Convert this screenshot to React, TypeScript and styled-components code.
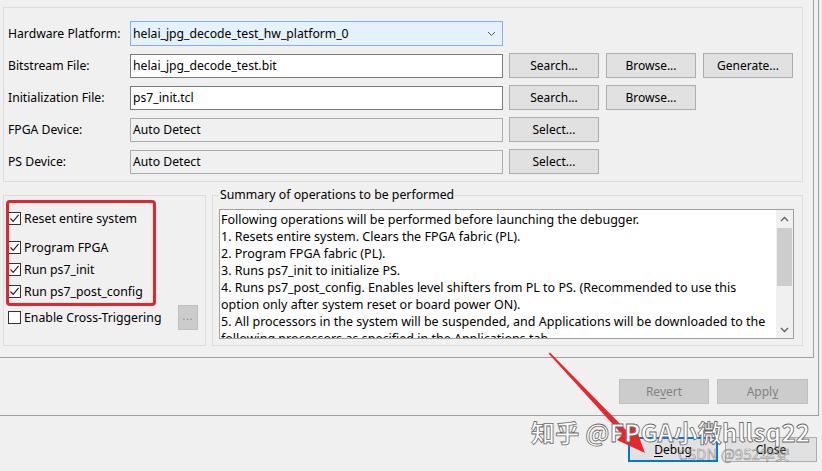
import React from 'react'
import styled, { createGlobalStyle } from 'styled-components'

const GlobalStyle = createGlobalStyle`
  html, body {
    margin: 0;
    padding: 0;
    background: #f0f0f0;
  }
  body {
    font-family: "Noto Sans", "Noto Sans CJK SC", sans-serif;
    font-size: 12px;
    color: #000;
  }
`

const Page = styled.div`
  position: relative;
  width: 822px;
  height: 471px;
  overflow: hidden;
  background: #f0f0f0;
`

const OuterFrame = styled.div`
  width: 819px;
  height: 416px;
  box-sizing: border-box;
  border-right: 1px solid #a0a0a0;
  border-bottom: 1px solid #a0a0a0;
`

const InnerFrame = styled.div`
  width: 814px;
  height: 358px;
  box-sizing: border-box;
  padding: 7px 0 0 3px;
  border-right: 1px solid #a0a0a0;
  border-bottom: 1px solid #a0a0a0;
`

const Group = styled.div<{ $width: number; $height: number }>`
  width: ${({ $width }) => $width}px;
  height: ${({ $height }) => $height}px;
  box-sizing: border-box;
  border: 1px solid #dcdcdc;
`

const FormGroup = styled(Group)`
  display: flex;
  flex-direction: column;
  gap: 7px;
  padding: 13px 0 0 4px;
`

const FormRow = styled.div`
  display: flex;
  align-items: center;
  height: 25px;
`

const Label = styled.div`
  width: 122px;
  line-height: 16px;
  white-space: nowrap;
  font-size: 12.2px;
`

const Field = styled.div<{ $kind: 'combo' | 'text' | 'disabled' }>`
  width: 373px;
  height: ${({ $kind }) => ($kind === 'combo' ? 25 : 24)}px;
  box-sizing: border-box;
  display: flex;
  align-items: center;
  justify-content: space-between;
  padding: 0 6px 0 2px;
  white-space: nowrap;
  font-size: 12.2px;
  background: ${({ $kind }) =>
    $kind === 'combo' ? '#e5f1fb' : $kind === 'text' ? '#ffffff' : '#f0f0f0'};
  border: 1px solid
    ${({ $kind }) => ($kind === 'combo' ? '#7eb4ea' : $kind === 'text' ? '#7a7a7a' : '#adadad')};
`

const ButtonGroup = styled.div`
  display: flex;
  gap: 7px;
  margin-left: 6px;
`

const Button = styled.div<{ $width?: number; $disabled?: boolean; $default?: boolean }>`
  width: ${({ $width }) => $width ?? 90}px;
  height: 25px;
  box-sizing: border-box;
  display: flex;
  align-items: center;
  justify-content: center;
  white-space: nowrap;
  background: ${({ $disabled }) => ($disabled ? '#cccccc' : '#e1e1e1')};
  color: ${({ $disabled }) => ($disabled ? '#838383' : '#000')};
  border: ${({ $default, $disabled }) =>
    $default ? '2px solid #0078d7' : `1px solid ${$disabled ? '#bfbfbf' : '#adadad'}`};
  u {
    text-decoration-thickness: 1px;
    text-underline-offset: 2px;
  }
`

const BottomRow = styled.div`
  display: flex;
  align-items: flex-end;
  gap: 6px;
  margin-top: 5px;
`

const CheckGroup = styled(Group)`
  display: flex;
  flex-direction: column;
  padding: 11px 7px 0 4px;
  font-size: 12.3px;
`

const CheckRow = styled.div<{ $gap?: number; $tall?: boolean }>`
  display: flex;
  align-items: center;
  gap: 3px;
  height: ${({ $tall }) => ($tall ? 25 : 22)}px;
  margin-top: ${({ $gap }) => $gap ?? 0}px;
  white-space: nowrap;
`

const CheckBox = styled.span`
  width: 13px;
  height: 13px;
  box-sizing: border-box;
  border: 1px solid #333;
  background: #fff;
  display: flex;
  align-items: center;
  justify-content: center;
  flex-shrink: 0;
`

const SmallButton = styled(Button)`
  margin-left: auto;
  letter-spacing: 1px;
  font-size: 10px;
  padding-bottom: 4px;
`

const SummarySet = styled.fieldset`
  width: 591px;
  margin: 0;
  padding: 0 8px 6px 6px;
  box-sizing: border-box;
  border: 1px solid #dcdcdc;
  min-width: 0;
`

const Legend = styled.legend`
  padding: 0 1px;
  line-height: 16px;
  font-size: 12.3px;
`

const TextBox = styled.div`
  margin-top: 6px;
  height: 130px;
  box-sizing: border-box;
  border: 1px solid #a0a0a0;
  background: #fff;
  display: flex;
`

const TextLines = styled.div`
  flex: 1;
  overflow: hidden;
  padding: 1px 0 0 1px;
  line-height: 17px;
  font-size: 12.5px;
  white-space: nowrap;
`

const ScrollBar = styled.div`
  width: 17px;
  background: #f0f0f0;
  display: flex;
  flex-direction: column;
  align-items: center;
`

const ScrollArrow = styled.div`
  height: 17px;
  width: 17px;
  display: flex;
  align-items: center;
  justify-content: center;
`

const Thumb = styled.div`
  width: 15px;
  height: 58px;
  margin-top: 1px;
  background: #cdcdcd;
`

const ScrollSpacer = styled.div`
  flex: 1;
`

const ActionRow = styled.div<{ $height: number; $gap: number; $right: number }>`
  height: ${({ $height }) => $height}px;
  box-sizing: border-box;
  display: flex;
  justify-content: flex-end;
  align-items: flex-start;
  padding: 21px ${({ $right }) => $right}px 0 0;
  gap: ${({ $gap }) => $gap}px;
`

const Annotation = styled.div`
  position: absolute;
  left: 6px;
  top: 200px;
  width: 150px;
  height: 106px;
  box-sizing: border-box;
  border: 3px solid #e3262b;
  border-radius: 4px;
  pointer-events: none;
`

const ArrowLayer = styled.svg`
  position: absolute;
  left: 0;
  top: 0;
  pointer-events: none;
`

const Watermark = styled.div`
  position: absolute;
  left: 531px;
  top: 416px;
  font-family: "Noto Sans CJK SC", "Noto Sans", sans-serif;
  font-size: 24px;
  font-weight: 700;
  letter-spacing: 0.3px;
  line-height: 32px;
  color: #fff;
  -webkit-text-stroke: 0.8px #6a6a6a;
  white-space: nowrap;
  pointer-events: none;
`

const CsdnMark = styled.div`
  position: absolute;
  left: 678px;
  top: 444px;
  font-family: "Noto Sans CJK SC", "Noto Sans", sans-serif;
  font-size: 15px;
  line-height: 20px;
  color: rgba(255, 255, 255, 0.35);
  -webkit-text-stroke: 0.6px rgba(90, 90, 90, 0.6);
  white-space: nowrap;
  pointer-events: none;
`

const Chevron = ({ up }: { up?: boolean }) => (
  <svg width="9" height="6" viewBox="0 0 9 6">
    <path
      d={up ? 'M1 5 L4.5 1.5 L8 5' : 'M1 1 L4.5 4.5 L8 1'}
      fill="none"
      stroke="#606060"
      strokeWidth="1.3"
    />
  </svg>
)

const Check = ({ checked, children }: { checked: boolean; children: React.ReactNode }) => (
  <>
    <CheckBox>
      {checked && (
        <svg width="11" height="11" viewBox="0 0 11 11">
          <path d="M1.5 5.5 L4.2 8.3 L9.6 1.8" fill="none" stroke="#222" strokeWidth="1.2" />
        </svg>
      )}
    </CheckBox>
    <span>{children}</span>
  </>
)

const summary = [
  'Following operations will be performed before launching the debugger.',
  '1. Resets entire system. Clears the FPGA fabric (PL).',
  '2. Program FPGA fabric (PL).',
  '3. Runs ps7_init to initialize PS.',
  '4. Runs ps7_post_config. Enables level shifters from PL to PS. (Recommended to use this',
  'option only after system reset or board power ON).',
  '5. All processors in the system will be suspended, and Applications will be downloaded to the',
  'following processors as specified in the Applications tab.'
]

const App = () => {
  return (
    <Page>
      <GlobalStyle />
      <OuterFrame>
        <InnerFrame>
          <FormGroup $width={800} $height={175}>
            <FormRow>
              <Label>Hardware Platform:</Label>
              <Field $kind="combo">
                <span>helai_jpg_decode_test_hw_platform_0</span>
                <svg width="9" height="6" viewBox="0 0 9 6">
                  <path d="M1 1 L4.5 4.5 L8 1" fill="none" stroke="#555" strokeWidth="1" />
                </svg>
              </Field>
            </FormRow>
            <FormRow>
              <Label>Bitstream File:</Label>
              <Field $kind="text">helai_jpg_decode_test.bit</Field>
              <ButtonGroup>
                <Button>Search...</Button>
                <Button>Browse...</Button>
                <Button>Generate...</Button>
              </ButtonGroup>
            </FormRow>
            <FormRow>
              <Label>Initialization File:</Label>
              <Field $kind="text">ps7_init.tcl</Field>
              <ButtonGroup>
                <Button>Search...</Button>
                <Button>Browse...</Button>
              </ButtonGroup>
            </FormRow>
            <FormRow>
              <Label>FPGA Device:</Label>
              <Field $kind="disabled">Auto Detect</Field>
              <ButtonGroup>
                <Button>Select...</Button>
              </ButtonGroup>
            </FormRow>
            <FormRow>
              <Label>PS Device:</Label>
              <Field $kind="disabled">Auto Detect</Field>
              <ButtonGroup>
                <Button>Select...</Button>
              </ButtonGroup>
            </FormRow>
          </FormGroup>

          <BottomRow>
            <CheckGroup $width={203} $height={151}>
              <CheckRow>
                <Check checked>Reset entire system</Check>
              </CheckRow>
              <CheckRow $gap={7}>
                <Check checked>Program FPGA</Check>
              </CheckRow>
              <CheckRow>
                <Check checked>Run ps7_init</Check>
              </CheckRow>
              <CheckRow>
                <Check checked>Run ps7_post_config</Check>
              </CheckRow>
              <CheckRow $gap={3} $tall>
                <Check checked={false}>Enable Cross-Triggering</Check>
                <SmallButton $width={20} $disabled>...</SmallButton>
              </CheckRow>
            </CheckGroup>

            <SummarySet>
              <Legend>Summary of operations to be performed</Legend>
              <TextBox>
                <TextLines>
                  {summary.map((line, idx) => (
                    <div key={`summary line ${idx + 1}`}>{line}</div>
                  ))}
                </TextLines>
                <ScrollBar>
                  <ScrollArrow>
                    <Chevron up />
                  </ScrollArrow>
                  <Thumb />
                  <ScrollSpacer />
                  <ScrollArrow>
                    <Chevron />
                  </ScrollArrow>
                </ScrollBar>
              </TextBox>
            </SummarySet>
          </BottomRow>
        </InnerFrame>

        <ActionRow $height={57} $gap={8} $right={10}>
          <Button $disabled>
            <span>
              Re<u>v</u>ert
            </span>
          </Button>
          <Button $disabled $width={91}>
            <span>
              Appl<u>y</u>
            </span>
          </Button>
        </ActionRow>
      </OuterFrame>

      <ActionRow $height={55} $gap={7} $right={5}>
        <Button $default>
          <span>
            <u>D</u>ebug
          </span>
        </Button>
        <Button $width={92}>
          <span>Close</span>
        </Button>
      </ActionRow>

      <Annotation />
      <ArrowLayer width="822" height="471" viewBox="0 0 822 471">
        <polygon points="548.5,353.5 550,352.5 628,432 623.5,436" fill="#e8262b" />
        <polygon points="645,453 617,440 634,423" fill="#e8262b" />
      </ArrowLayer>
      <Watermark>知乎 @FPGA小微hllsq22</Watermark>
      <CsdnMark>CSDN @952华安</CsdnMark>
    </Page>
  )
}

export default App
